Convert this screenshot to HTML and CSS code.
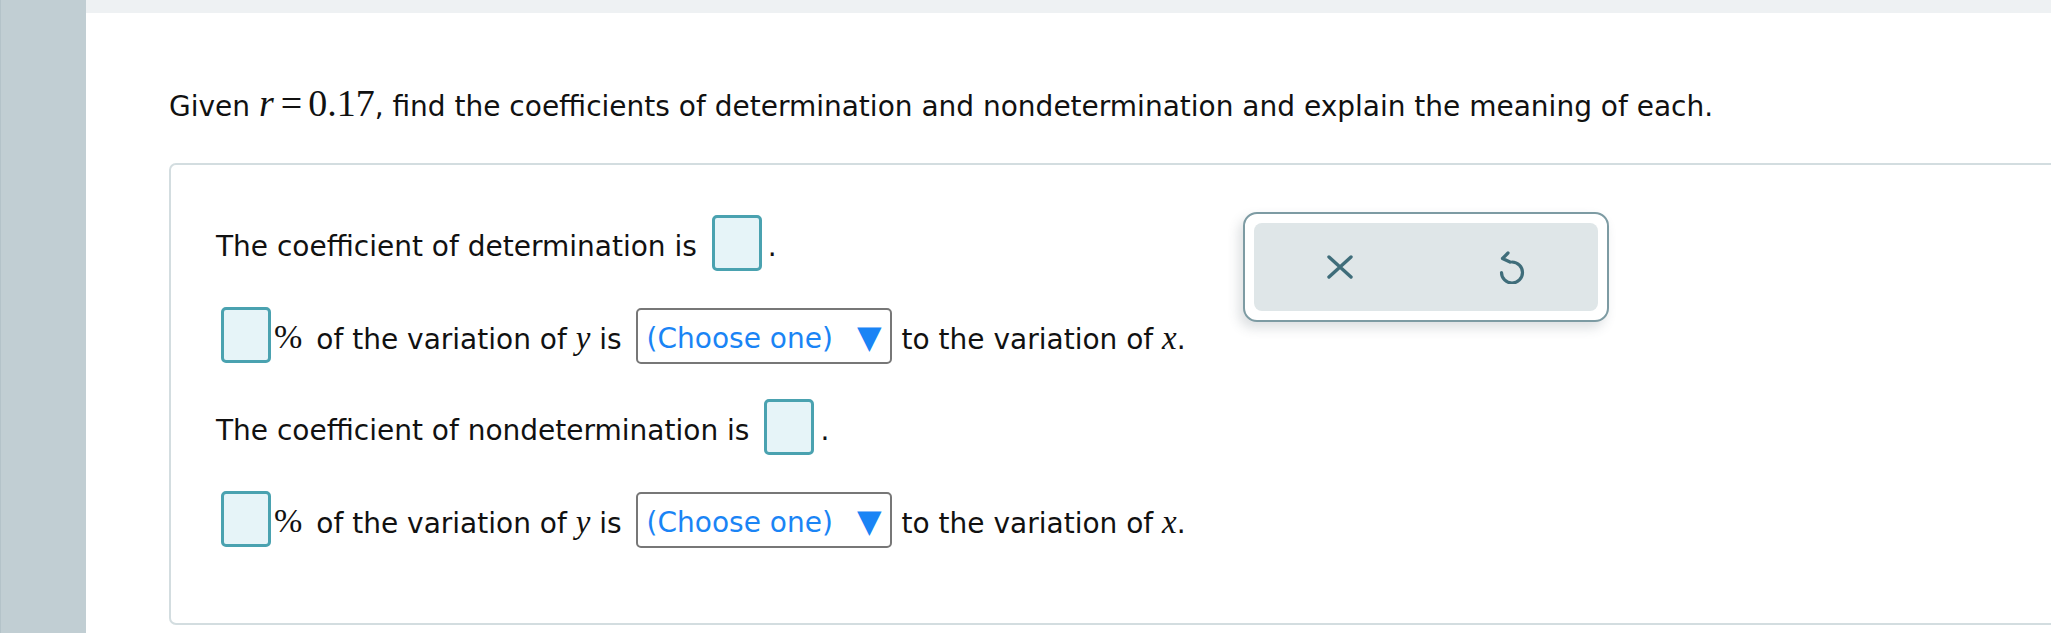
FILE: index.html
```html
<!DOCTYPE html>
<html lang="en">
<head>
<meta charset="utf-8">
<title>Coefficient of determination</title>
<link rel="stylesheet" href="styles.css">
</head>
<body>
<div class="app">
  <aside class="sidebar"></aside>
  <main class="main">
    <div class="topbar"></div>
    <p class="question">Given <span class="qmath"><i>r</i><span class="eq">=</span>0.17</span>, find the coefficients of determination and nondetermination and explain the meaning of each.</p>
    <section class="panel">
      <div class="row">
        <span class="t">The coefficient of determination is</span>
        <span class="box box-after"></span>
        <span class="t">.</span>
      </div>
      <div class="row">
        <span class="box box-lead"></span>
        <span class="math pct">%</span>
        <span class="t">of the variation of <i class="mv">y</i> is</span>
        <span class="select"><span class="sel-text">(Choose one)</span><span class="tri">&#9660;</span></span>
        <span class="t">to the variation of <i class="mv">x</i>.</span>
      </div>
      <div class="row">
        <span class="t">The coefficient of nondetermination is</span>
        <span class="box box-after"></span>
        <span class="t">.</span>
      </div>
      <div class="row">
        <span class="box box-lead"></span>
        <span class="math pct">%</span>
        <span class="t">of the variation of <i class="mv">y</i> is</span>
        <span class="select"><span class="sel-text">(Choose one)</span><span class="tri">&#9660;</span></span>
        <span class="t">to the variation of <i class="mv">x</i>.</span>
      </div>
    </section>
  </main>
</div>
<div class="tools">
  <div class="tools-inner">
    <button class="tool" aria-label="Clear">
      <svg width="26" height="24" viewBox="0 0 26 24"><path d="M2 2 L24 22 M24 2 L2 22" stroke="#3f6d7a" stroke-width="3.4" stroke-linecap="round" fill="none"/></svg>
    </button>
    <button class="tool" aria-label="Reset">
      <svg width="30" height="34" viewBox="0 0 30 34"><path d="M15 12 A10.5 10.5 0 1 1 4.5 22.5" stroke="#3f6d7a" stroke-width="3.2" stroke-linecap="round" fill="none"/><path d="M11 3 L5.5 8.5 L13 12" stroke="#3f6d7a" stroke-width="3.2" stroke-linecap="round" stroke-linejoin="round" fill="none"/></svg>
    </button>
  </div>
</div>
</body>
</html>
```

FILE: styles.css
```css
html, body {
  margin: 0;
  padding: 0;
  background: #ffffff;
  overflow: hidden;
}
body {
  font-family: "DejaVu Sans", Verdana, sans-serif;
  font-size: 28px;
  color: #111111;
  width: 2051px;
  height: 633px;
  position: relative;
}
.app {
  display: flex;
  height: 633px;
}
.sidebar {
  width: 86px;
  flex: 0 0 86px;
  background: #c1ced3;
  border-left: 1px solid #b4c3c9;
  box-sizing: border-box;
}
.main {
  flex: 1;
  min-width: 0;
}
.topbar {
  height: 13px;
  background: #eef1f3;
}
.question {
  margin: 74px 0 0 83px;
  line-height: 32px;
  height: 32px;
  white-space: nowrap;
}
.qmath {
  font-family: "Liberation Serif", "Times New Roman", serif;
  font-size: 38px;
}
.qmath i {
  font-style: italic;
}
.math {
  font-family: "Liberation Serif", "Times New Roman", serif;
  font-size: 34px;
}
.mv {
  font-family: "Liberation Serif", "Times New Roman", serif;
  font-style: italic;
  font-size: 33px;
}
.eq {
  margin: 0 6px 0 7px;
}
.panel {
  margin: 44px 0 0 83px;
  width: 2100px;
  height: 462px;
  box-sizing: border-box;
  border: 2px solid #d3dde0;
  border-radius: 7px;
  padding: 50px 0 0 45px;
  display: flex;
  flex-direction: column;
  gap: 36px;
}
.row {
  display: flex;
  align-items: center;
  height: 56px;
  white-space: pre;
}
.t {
  padding-top: 6px;
}
.box {
  width: 50px;
  height: 56px;
  box-sizing: border-box;
  border: 3px solid #4aa2b0;
  border-radius: 5px;
  background: #e6f4f8;
  flex: 0 0 auto;
}
.box-after {
  margin: 0 6px 0 15px;
}
.box-lead {
  margin-left: 5px;
  margin-right: 3px;
}
.pct {
  padding-top: 4px;
  margin-right: 14px;
}
.select {
  display: flex;
  align-items: center;
  width: 256px;
  height: 56px;
  box-sizing: border-box;
  border: 2px solid #777777;
  border-radius: 5px;
  margin: 2px 10px 0 14px;
  padding: 4px 0 0 9px;
  color: #1a84f5;
  background: #ffffff;
}
.sel-text {
  flex: 1;
}
.tri {
  font-size: 32px;
  margin-right: 8px;
  padding-bottom: 3px;
}
.tools {
  position: absolute;
  left: 1243px;
  top: 212px;
  width: 366px;
  height: 110px;
  box-sizing: border-box;
  border: 2px solid #7d9ba3;
  border-radius: 14px;
  background: #ffffff;
  padding: 9px;
  box-shadow: -4px 6px 12px rgba(60, 80, 90, 0.18);
}
.tools-inner {
  display: flex;
  height: 100%;
  background: #dfe6e8;
  border-radius: 8px;
}
.tool {
  flex: 1;
  display: flex;
  align-items: center;
  justify-content: center;
  background: transparent;
  border: none;
  padding: 0;
  margin: 0;
}
```
